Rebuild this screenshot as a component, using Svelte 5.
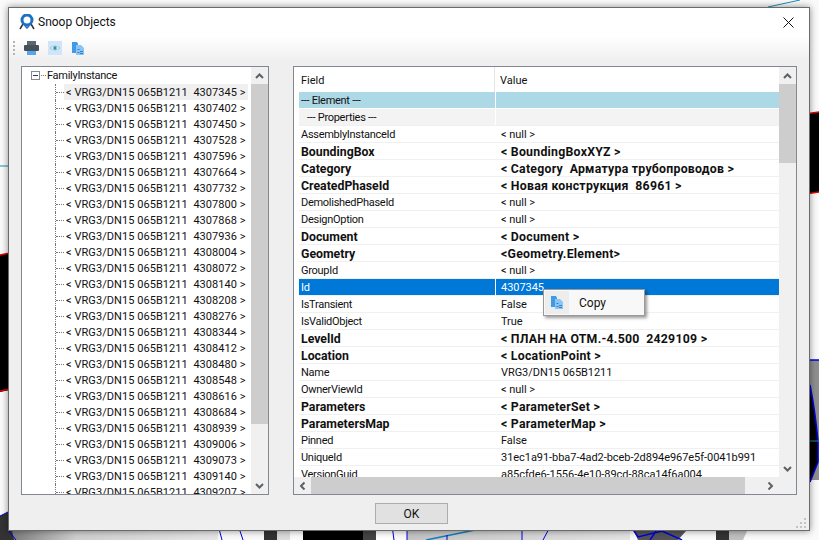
<script>
  const ids = [4307345, 4307402, 4307450, 4307528, 4307596, 4307664, 4307732, 4307800, 4307868, 4307936, 4308004, 4308072, 4308140, 4308208, 4308276, 4308344, 4308412, 4308480, 4308548, 4308616, 4308684, 4308939, 4309006, 4309073, 4309140, 4309207]

  // b = bold row (the value is another object)
  const rows = [
    { f: "AssemblyInstanceId", v: "< null >" },
    { f: "BoundingBox", v: "< BoundingBoxXYZ >", b: true },
    { f: "Category", v: "< Category  Арматура трубопроводов >", b: true },
    { f: "CreatedPhaseId", v: "< Новая конструкция  86961 >", b: true },
    { f: "DemolishedPhaseId", v: "< null >" },
    { f: "DesignOption", v: "< null >" },
    { f: "Document", v: "< Document >", b: true },
    { f: "Geometry", v: "<Geometry.Element>", b: true },
    { f: "GroupId", v: "< null >" },
    { f: "Id", v: "4307345", sel: true },
    { f: "IsTransient", v: "False" },
    { f: "IsValidObject", v: "True" },
    { f: "LevelId", v: "< ПЛАН НА ОТМ.-4.500  2429109 >", b: true },
    { f: "Location", v: "< LocationPoint >", b: true },
    { f: "Name", v: "VRG3/DN15 065B1211" },
    { f: "OwnerViewId", v: "< null >" },
    { f: "Parameters", v: "< ParameterSet >", b: true },
    { f: "ParametersMap", v: "< ParameterMap >", b: true },
    { f: "Pinned", v: "False" },
    { f: "UniqueId", v: "31ec1a91-bba7-4ad2-bceb-2d894e967e5f-0041b991" },
    { f: "VersionGuid", v: "a85cfde6-1556-4e10-89cd-88ca14f6a004" }
  ]
</script>

{#snippet docIcon()}
  <svg class="doc" viewBox="0 0 14 15" width="14" height="15">
    <path d="M1 1h5l1 2v9H1z" fill="#3f9be8" />
    <path d="M5 4h5l3 3v7H5z" fill="#8cc4f2" />
    <path d="M6.500 8h2v1h-2zM9 10h3v1H9zM6.500 11h2v1h-2zM9 12h3v1H9z" fill="#2f7fcb" />
  </svg>
{/snippet}

{#snippet chevron(dir)}
  <svg class="chev" viewBox="0 0 9 6" width="9" height="6" style="transform: rotate({dir}deg)">
    <path d="M1 5l3.500-3.500L8 5" fill="none" stroke="#606060" stroke-width="2" />
  </svg>
{/snippet}

<div class="desktop">
  <svg class="model" viewBox="0 0 819 540" width="819" height="540">
    <defs>
      <linearGradient id="metal" x1="0" x2="1" y1="0" y2="0">
        <stop offset="0" stop-color="#6e6e6e" />
        <stop offset=".35" stop-color="#cfcfcf" />
        <stop offset="1" stop-color="#e6e6e6" />
      </linearGradient>
      <linearGradient id="steel" x1="0" x2="1" y1="0" y2="0">
        <stop offset="0" stop-color="#c4c4c4" />
        <stop offset="1" stop-color="#e4e4e4" />
      </linearGradient>
    </defs>
    <rect width="819" height="540" fill="#fafafa" />
    <path d="M0 166h10" stroke="#1b8dbb" />
    <path d="M768 7l32-7" stroke="#1b8dbb" />
    <path d="M0 255l10-2v137l-10 2z" fill="#000" />
    <path d="M0 255l10-2M0 391l10-2" stroke="#e00000" stroke-width="1.500" fill="none" />
    <path d="M805 114l14-2v80l-14 2z" fill="#000" />
    <path d="M805 114l14-2M805 194l14-2" stroke="#e00000" stroke-width="1.500" fill="none" />

    <rect x="805" y="360" width="14" height="120" fill="#8f8f8f" />
    <path d="M808 385H810Q815 410 818 441V462L810 482H808z" fill="#000" />
    <path d="M810 385Q815 410 818 441V462L810 482M805 360h14" stroke="#0000e0" stroke-width="1.500" fill="none" />
    <path d="M805 441h14" stroke="#1b8dbb" />

    <rect y="525" width="218" height="15" fill="url(#metal)" />
    <path d="M0 516l8-4 6 28H0z" fill="#333" />
    <path d="M0 516l8-4M8 530l8 10" stroke="#0000e0" fill="none" />
    <path d="M218 525l4 15M238 525l5 15" stroke="#0000e0" fill="none" />
    <rect x="264" y="525" width="13" height="15" fill="#333" />
    <rect x="277" y="525" width="13" height="15" fill="#dcdcdc" />
    <rect x="303" y="525" width="60" height="15" fill="#000" />
    <rect x="363" y="525" width="13" height="15" fill="#444" />
    <rect x="376" y="525" width="16" height="15" fill="#fff" />
    <rect x="407" y="525" width="223" height="15" fill="url(#steel)" />
    <path d="M392 525l2 15M407 525v15" stroke="#0000e0" fill="none" />
    <path d="M426 540l49-10" stroke="#0f7fc0" stroke-width="1.500" fill="none" />
    <path d="M447 535v5M522 525v15M551 525l-8 15" stroke="#0000e0" fill="none" />
    <path d="M634 531l4 9h40l8-9z" fill="#555" />
    <path d="M630 525l8 12 24-6 20 9M650 540l6-9" stroke="#0000e0" stroke-width="1.500" fill="none" />
    <rect x="716" y="525" width="13" height="15" fill="#333" />
    <path d="M729 531h18l-4 9h-14z" fill="#c0c0c0" />
  </svg>

  <div class="window">
    <div class="title">
      <svg class="app" viewBox="0 0 16 16" width="16" height="16">
        <path d="M4 10L1 15M12 10l3 5" stroke="#333" stroke-width="1.500" />
        <circle cx="8" cy="6" r="5" fill="none" stroke="#1f6fc4" stroke-width="3" />
        <circle cx="8" cy="6" r="2" fill="#fff" />
        <path d="M6 12l2 2 2-2" stroke="#1f6fc4" stroke-width="1.500" fill="none" />
      </svg>
      <span>Snoop Objects</span>
      <svg class="close" viewBox="0 0 11 11" width="11" height="11">
        <path d="M.5.5l10 10M10.500.5l-10 10" stroke="#111" stroke-width="1" />
      </svg>
    </div>

    <div class="toolbar">
      <div class="grip"></div>
      <svg viewBox="0 0 15 14" width="15" height="14">
        <rect x="3" y="0" width="9" height="4" fill="#5a6670" />
        <rect x="0" y="4" width="15" height="6" rx="1" fill="#46505a" />
        <rect x="3" y="10" width="9" height="4" fill="#55a8ee" />
      </svg>
      <svg viewBox="0 0 14 14" width="14" height="14">
        <rect width="14" height="14" fill="#cfe6fa" />
        <path d="M2 7q5-4 10 0q-5 4-10 0z" fill="#e8f4fc" stroke="#8fa8b8" stroke-width=".6" />
        <circle cx="7" cy="7" r="1.700" fill="#14a0a0" />
      </svg>
      {@render docIcon()}
    </div>

    <div class="panes">
      <div class="box tree">
        <div class="tree-rows">
          <div class="root">
            <span class="plus"><i></i></span>
            <span class="dash"></span>
            <span class="root-name">FamilyInstance</span>
          </div>
          {#each ids as id, i}
            <div class="node">
              <span class="branch"></span>
              <span class="label" class:current={i === 0}>&lt; VRG3/DN15 065B1211  {id} &gt;</span>
            </div>
          {/each}
        </div>
        <div class="vbar">
          <div class="arrow">{@render chevron(0)}</div>
          <div class="thumb tree-thumb"></div>
          <div class="rest"></div>
          <div class="arrow">{@render chevron(180)}</div>
        </div>
      </div>

      <div class="box list">
        <div class="list-main">
          <div class="list-view">
            <div class="head">
              <div class="hf">Field</div>
              <div class="hv">Value</div>
            </div>
            <div class="row element">
              <div class="f">--- Element ---</div>
              <div class="v"></div>
            </div>
            <div class="row props">
              <div class="f indent">--- Properties ---</div>
              <div class="v"></div>
            </div>
            {#each rows as r}
              <div class="row" class:bold={r.b} class:sel={r.sel}>
                <div class="f">{r.f}</div>
                <div class="v">{r.v}</div>
              </div>
            {/each}
          </div>
          <div class="vbar">
            <div class="arrow">{@render chevron(0)}</div>
            <div class="thumb list-thumb"></div>
            <div class="rest"></div>
            <div class="arrow">{@render chevron(180)}</div>
          </div>
        </div>
        <div class="hbar">
          <div class="harrow">{@render chevron(-90)}</div>
          <div class="hthumb"></div>
          <div class="hrest"></div>
          <div class="harrow">{@render chevron(90)}</div>
          <div class="corner"></div>
        </div>
      </div>
    </div>

    <div class="footer">
      <button class="ok">OK</button>
    </div>
    <svg class="sizer" viewBox="0 0 11 11" width="11" height="11">
      <path d="M8 1h2v2H8zM4 5h2v2H4zM8 5h2v2H8zM0 9h2v2H0zM4 9h2v2H4zM8 9h2v2H8z" fill="#c4c4c4" />
    </svg>

    <div class="menu">
      <div class="menu-icon">{@render docIcon()}</div>
      <span>Copy</span>
    </div>
  </div>
</div>

<style>
:global(body) {
  margin: 0;
  overflow: hidden;
}
.desktop {
  position: relative;
  width: 819px;
  height: 540px;
  overflow: hidden;
  font-family: Roboto, "Liberation Sans", sans-serif;
  font-size: 11px;
  color: #111;
}
.model {
  position: absolute;
  left: 0;
  top: 0;
}
.window {
  position: absolute;
  left: 8px;
  top: 7px;
  width: 800px;
  height: 522px;
  display: flex;
  flex-direction: column;
  background: #efefef;
  border: 1px solid #6b6b6b;
  box-shadow: 0 0 7px rgba(0, 0, 0, .45);
}
.title {
  height: 28px;
  flex: none;
  display: flex;
  align-items: center;
  gap: 3px;
  padding: 0 15px 0 10px;
  background: #fff;
  font-size: 12px;
  line-height: 30px;
}
.close {
  margin-left: auto;
}
.toolbar {
  height: 24px;
  flex: none;
  display: flex;
  align-items: center;
  gap: 9px;
  padding-left: 4px;
  background: linear-gradient(#fff, #f0f0f0);
}
.grip {
  width: 2px;
  height: 14px;
  background: repeating-linear-gradient(#b4b4b4 0 2px, transparent 2px 4px);
}
.panes {
  flex: none;
  display: flex;
  gap: 24px;
  padding: 6px 13px 0 12px;
}
.box {
  height: 429px;
  background: #fff;
  border: 1px solid #828790;
  box-sizing: border-box;
  overflow: hidden;
}
.tree {
  width: 248px;
  flex: none;
  display: flex;
}
.tree-rows {
  flex: 1;
  min-width: 0;
  overflow: hidden;
}
.root {
  height: 17px;
  display: flex;
  align-items: center;
  padding-left: 9px;
  line-height: 19px;
}
.root-name {
  letter-spacing: -.28px;
}
.plus {
  width: 9px;
  height: 9px;
  border: 1px solid #8a8a8a;
  box-sizing: border-box;
  display: flex;
  align-items: center;
  justify-content: center;
}
.plus i {
  width: 5px;
  height: 1px;
  background: #2a3f70;
}
.dash {
  width: 5px;
  margin: 0 1px;
  border-top: 1px dotted #777;
}
.node {
  height: 16px;
  display: flex;
  align-items: center;
  margin-left: 33px;
  border-left: 1px dotted #777;
}
.branch {
  width: 8px;
  flex: none;
  border-top: 1px dotted #777;
}
.label {
  height: 16px;
  line-height: 18px;
  flex: none;
  padding: 0 2px;
  white-space: pre;
  letter-spacing: .06px;
}
.label.current {
  background: #f0f0f0;
}
.vbar {
  width: 17px;
  flex: none;
  display: flex;
  flex-direction: column;
  background: #f0f0f0;
}
.arrow {
  height: 17px;
  flex: none;
  display: flex;
  align-items: center;
  justify-content: center;
}
.thumb {
  flex: none;
  background: #cdcdcd;
}
.tree-thumb {
  height: 340px;
}
.list-thumb {
  height: 79px;
}
.rest {
  flex: 1;
}
.list {
  width: 504px;
  flex: none;
  display: flex;
  flex-direction: column;
}
.list-main {
  flex: 1;
  min-height: 0;
  display: flex;
}
.list-view {
  flex: 1;
  min-width: 0;
  overflow: hidden;
  padding-left: 5px;
}
.head {
  height: 25px;
  display: grid;
  grid-template-columns: 201px 1fr;
  margin-left: -5px;
  line-height: 27px;
}
.hf {
  padding-left: 7px;
  border-right: 1px solid #e5e5e5;
}
.hv {
  padding-left: 5px;
}
.row {
  height: 17px;
  display: grid;
  grid-template-columns: 196px 1fr;
  grid-template-rows: 16px;
  column-gap: 1px;
  line-height: 18px;
  box-sizing: border-box;
  border-bottom: 1px solid #f0f0f0;
}
.f, .v {
  white-space: pre;
}
.f {
  padding-left: 2px;
  letter-spacing: -.28px;
}
.v {
  padding-left: 5px;
  letter-spacing: -.05px;
}
.indent {
  padding-left: 8px;
}
.element {
  border-bottom-color: #fff;
}
.element .f, .element .v {
  background: #add8e6;
}
.props .f, .props .v {
  background: #f3f3f3;
}
.bold {
  font-weight: 700;
  font-size: 12.3px;
}
.bold .f {
  letter-spacing: 0;
}
.bold .v {
  letter-spacing: .25px;
}
.sel .f, .sel .v {
  background: #0078d7;
  color: #fff;
}
.hbar {
  height: 17px;
  flex: none;
  display: flex;
  background: #f0f0f0;
}
.harrow {
  width: 17px;
  flex: none;
  display: flex;
  align-items: center;
  justify-content: center;
}
.hthumb {
  width: 434px;
  flex: none;
  background: #cdcdcd;
}
.hrest {
  flex: 1;
}
.corner {
  width: 17px;
  flex: none;
}
.footer {
  flex: none;
  display: flex;
  justify-content: center;
  padding: 8px 0 0 5px;
}
.ok {
  width: 73px;
  height: 21px;
  padding: 0;
  background: #e1e1e1;
  border: 1px solid #adadad;
  font: inherit;
  font-size: 12px;
  color: #111;
}
.sizer {
  position: absolute;
  right: 2px;
  bottom: 2px;
}
.menu {
  position: absolute;
  left: 534px;
  top: 281px;
  width: 102px;
  height: 27px;
  display: flex;
  align-items: center;
  gap: 10px;
  box-sizing: border-box;
  background: #f8f8f8;
  border: 1px solid #9a9a9a;
  box-shadow: 2px 2px 3px rgba(0, 0, 0, .4);
  font-size: 12px;
  line-height: 1;
}
.menu-icon {
  width: 24px;
  height: 23px;
  margin-left: 1px;
  display: flex;
  align-items: center;
  justify-content: center;
  background: #ededed;
}
</style>
